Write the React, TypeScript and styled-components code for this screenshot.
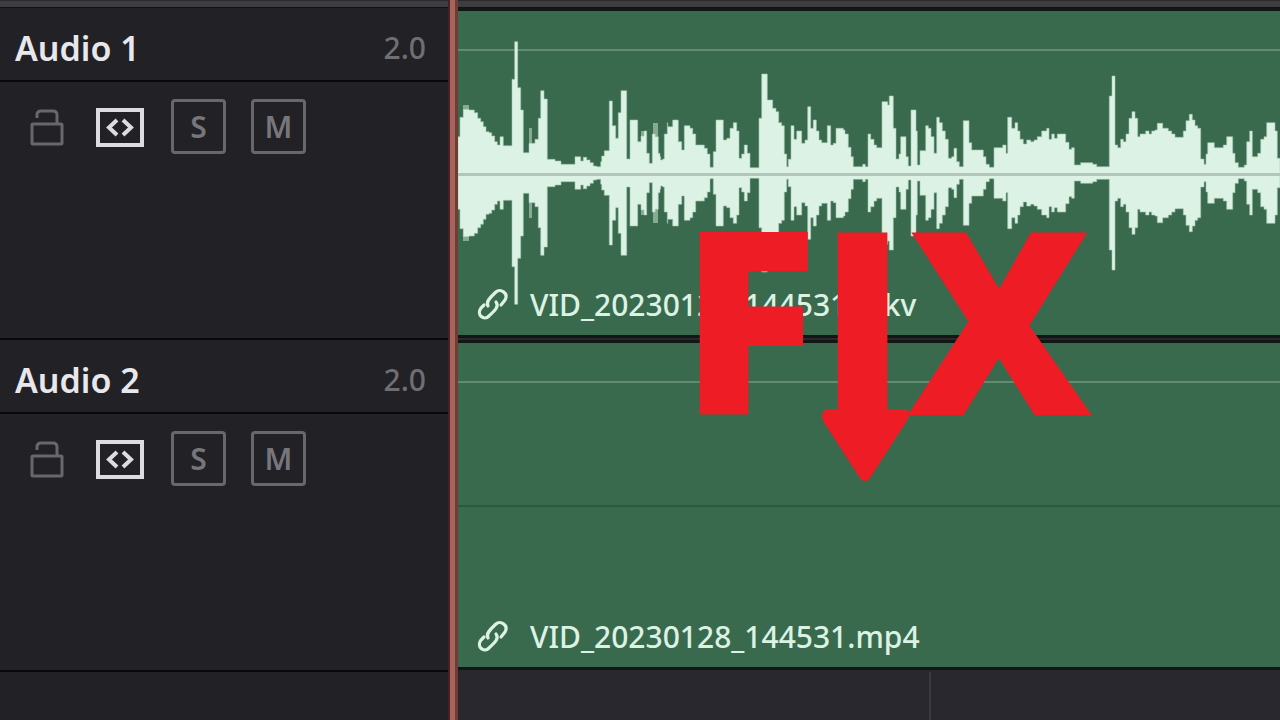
import React from "react";
import styled, { createGlobalStyle } from "styled-components";

const GlobalStyle = createGlobalStyle`
  * { box-sizing: border-box; }
  body {
    margin: 0;
    background: #222126;
    font-family: "Noto Sans", "Open Sans", sans-serif;
    overflow-x: hidden;
  }
`;

const Timeline = styled.main`
  position: relative;
  display: flex;
  flex-direction: column;
  min-height: 100vh;
  overflow: hidden;
  background: #222126;
`;

const Ruler = styled.div`
  height: 8px;
  background: #3e3e40;
  border-top: 1px solid #2a2a2c;
  border-bottom: 1px solid #111113;
`;

const TrackRow = styled.section`
  display: grid;
  grid-template-columns: 448px 1fr;
  height: 332px;
`;

const TrackHead = styled.div`
  display: flex;
  flex-direction: column;
  background: #222126;
  border-bottom: 2px solid #09090c;
`;

const TrackTitle = styled.header`
  display: flex;
  align-items: center;
  justify-content: space-between;
  height: 74px;
  padding: 8px 22px 0 15px;
  border-bottom: 2px solid #09090c;
`;

const TrackName = styled.h2`
  margin: 0;
  color: #e8e8ec;
  font-size: 34px;
  line-height: 40px;
  font-weight: 600;
`;

const Channels = styled.span`
  color: #6f6e73;
  font-size: 30px;
  line-height: 40px;
  font-weight: 500;
`;

const Controls = styled.div`
  display: flex;
  align-items: center;
  padding: 17px 0 0 28px;
`;

const IconButton = styled.button<{ $gap: number }>`
  display: flex;
  padding: 0;
  margin-right: ${(p) => p.$gap}px;
  border: 0;
  background: none;
`;

const LetterButton = styled.button`
  width: 55px;
  height: 55px;
  margin-right: 25px;
  padding: 0;
  border: 3px solid #68676c;
  border-radius: 4px;
  background: #222126;
  color: #77767b;
  font-family: inherit;
  font-size: 30px;
  line-height: 48px;
  font-weight: 600;
`;

const Lane = styled.div`
  display: flex;
  padding: 3px 0 3px 10px;
  background: #111714;
  border-bottom: 2px solid #29292d;
`;

const Clip = styled.article`
  position: relative;
  flex: 1;
  min-width: 0;
  display: flex;
  align-items: flex-end;
  background: #3a6a4e;
  overflow: hidden;
`;

const LevelLine = styled.div`
  position: absolute;
  top: 38px;
  left: 0;
  right: 0;
  height: 2px;
  background: #638b72;
`;

const CenterLine = styled.div<{ $tone: string }>`
  position: absolute;
  top: 162px;
  left: 0;
  right: 0;
  height: 2px;
  background: ${(p) => p.$tone};
`;

const WaveSvg = styled.svg`
  position: absolute;
  top: 0;
  left: 0;
  width: 100%;
  height: 100%;
`;

const ClipLabel = styled.div`
  position: relative;
  display: flex;
  align-items: center;
  gap: 18px;
  padding: 0 0 10px 16px;
  color: #dcf2e4;
  font-size: 30px;
  line-height: 40px;
  font-weight: 500;
`;

const EmptyRow = styled.div`
  flex: 1;
  display: grid;
  grid-template-columns: 448px 483px 1fr;
  min-height: 48px;
`;

const EmptyLane = styled.div`
  background: #29282e;

  & + & {
    border-left: 2px solid #3a3a40;
    margin-left: -2px;
  }
`;

const Playhead = styled.div`
  position: absolute;
  top: 0;
  bottom: 0;
  left: 448px;
  width: 10px;
  background: #a7645f;
  border-left: 2px solid #4b2023;
  border-right: 3px solid #713c31;
`;

const Callout = styled.div`
  position: absolute;
  top: 188px;
  left: 680px;
  color: #ee1c25;
  font-family: "Open Sans", "Noto Sans", sans-serif;
  font-size: 256px;
  line-height: 256px;
  font-weight: 800;
  white-space: nowrap;
`;

const ArrowHead = styled.svg`
  position: absolute;
  top: 409px;
  left: 821px;
`;

/* Columns of the wave form: [x, top y] on the timeline, three units to a pixel. */
const segments: { x: number; y: number; steps: string }[] = [
  {
    x: 450,
    y: 30,
    steps:
      "24:320 30:262 40:238 57:240 73:248 83:265 92:275 100:290 108:305 117:308 125:318 134:335 142:345 150:320 160:347 186:148 194:35 203:173 212:240 220:368 237:340 255:328 265:265 272:182 282:207 292:388 315:393 333:403 375:380 392:393 400:382 410:390 420:398 430:408 440:410 452:395 455:378 463:362 478:213 487:287 497:325 505:248 513:182 530:387 540:270 563:335 573:318 582:303 590:370 598:400 607:312 616:320 625:370 632:390 643:312 653:290",
  },
  {
    x: 660,
    y: 60,
    steps:
      "0:290 8:297 14:222 22:188 38:180 55:245 65:270 73:197 90:205 98:222 107:255 133:265 142:282 150:322 160:275 168:180 190:240 200:235 210:205 220:188 230:213 237:295 245:282 253:255 262:280 270:323 297:175 305:42 322:120 338:145 348:155 356:188 365:197 373:282 380:320 385:298 393:197 402:238 410:213 425:250 435:240 443:140 452:205 460:180 469:213 477:240 485:248 502:197 512:255 520:250 528:205 550:210 555:222 565:262 573:290 580:320",
  },
  {
    x: 860,
    y: 60,
    steps:
      "0:320 8:313 16:320 24:222 32:238 42:255 50:263 66:125 83:135 88:108 100:205 108:297 117:282 122:230 138:290 145:318 153:150 168:213 172:315 180:272 197:197 205:205 213:230 222:280 230:172 238:188 247:213 256:238 265:295 275:290 282:265 290:305 298:320 310:182 327:248 335:270 370:290 378:313 388:322 402:263 428:255 438:280 443:172 455:205 465:188 473:213 480:238 490:252 500:240 512:245 522:240 532:230 545:213 560:205 567:238 575:222 583:235 592:222",
  },
  {
    x: 1060,
    y: 60,
    steps:
      "0:222 17:247 27:268 35:263 43:315 62:308 98:313 110:320 148:108 156:48 165:255 173:263 182:238 190:245 198:222 207:175 216:155 225:175 233:230 240:222 257:213 267:222 275:213 285:210 292:190 308:205 325:213 335:222 345:232 370:213 378:182 388:163 397:180 405:197 413:205 422:297 432:313 438:282 443:248 463:263 490:255 500:230 518:280 525:308 535:322 553:315 560:245 569:213 577:290 593:280 602:238 612:230 620:188 640:188 645:213 652:295 660:295",
  },
];

const MIDDLE = 162;

const columns = segments
  .flatMap((s) =>
    s.steps.split(" ").map((pair) => {
      const [x, y] = pair.split(":").map(Number);
      return { x: s.x - 458 + x / 3, amp: MIDDLE + 11 - s.y - y / 3 };
    })
  )
  .sort((a, b) => a.x - b.x);

function outline(sign: 1 | -1) {
  let d = `M0 ${MIDDLE}`;
  let last = 0;
  for (const c of columns) {
    const y = MIDDLE - sign * Math.max(c.amp, 1);
    d += ` L${c.x.toFixed(1)} ${(MIDDLE - sign * last).toFixed(1)} L${c.x.toFixed(1)} ${y.toFixed(1)}`;
    last = Math.max(c.amp, 1);
  }
  return `${d} L822 ${(MIDDLE - sign * last).toFixed(1)} L822 ${MIDDLE}Z`;
}

/* Faint columns beside the peaks: x, width, amplitude. */
const faint = [
  [5, 6, 68],
  [71, 3, 45],
  [183, 3, 42],
  [195, 5, 50],
  [709, 10, 36],
];

function Waveform() {
  return (
    <WaveSvg viewBox="0 0 822 324" preserveAspectRatio="none" aria-hidden="true">
      {faint.map(([x, w, a]) => (
        <rect key={x} x={x} y={MIDDLE - a} width={w} height={a * 2} fill="#86ab94" />
      ))}
      <path d={outline(1)} fill="#dbf2e4" stroke="#a3c6b0" strokeWidth="0.6" />
      <path d={outline(-1)} fill="#dbf2e4" stroke="#a3c6b0" strokeWidth="0.6" />
      <path d="M0 162.5H822" stroke="#dbf2e4" strokeWidth="4" />
      <path d="M0 163.5H822" stroke="#b3c6ba" strokeWidth="3" />
    </WaveSvg>
  );
}

function LockIcon() {
  return (
    <svg width="38" height="40" viewBox="0 0 38 40" fill="none" stroke="#68676c" strokeWidth="3">
      <rect x="4" y="17" width="30" height="20" rx="1" />
      <path d="M9 11V8Q9 4 13 4H25Q29 4 29 8V17" />
    </svg>
  );
}

function AutoSelectIcon() {
  return (
    <svg width="50" height="40" viewBox="0 0 50 40" fill="none" stroke="#dddde1">
      <rect x="3" y="3" width="44" height="35" strokeWidth="4" />
      <path d="M22 13L14 20.500L22 28M28 13L36 20.500L28 28" strokeWidth="4" />
    </svg>
  );
}

function LinkIcon() {
  return (
    <svg width="38" height="38" viewBox="0 0 38 38" fill="none" stroke="#dcf2e4" strokeWidth="3.200" strokeLinecap="round">
      <path d="M14 20C11 15 18 10 22 6C26 2 35 7 31 14L27 19" />
      <path d="M22 16C26 21 19 26 15 30C10 35 2 29 7 22L10 19" />
    </svg>
  );
}

type TrackProps = { name: string; file: string; wave?: boolean };

function Track({ name, file, wave }: TrackProps) {
  return (
    <TrackRow aria-label={name}>
      <TrackHead>
        <TrackTitle>
          <TrackName>{name}</TrackName>
          <Channels>2.0</Channels>
        </TrackTitle>
        <Controls>
          <IconButton $gap={29} aria-label={`Lock ${name}`}>
            <LockIcon />
          </IconButton>
          <IconButton $gap={26} aria-label={`Auto select ${name}`}>
            <AutoSelectIcon />
          </IconButton>
          <LetterButton aria-label={`Solo ${name}`}>S</LetterButton>
          <LetterButton aria-label={`Mute ${name}`}>M</LetterButton>
        </Controls>
      </TrackHead>
      <Lane>
        <Clip>
          <LevelLine />
          {wave ? <Waveform /> : <CenterLine $tone="#30583f" />}
          <ClipLabel>
            <LinkIcon />
            <span>{file}</span>
          </ClipLabel>
        </Clip>
      </Lane>
    </TrackRow>
  );
}

export default function App() {
  return (
    <>
      <GlobalStyle />
      <Timeline>
        <Ruler />
        <Track name="Audio 1" file="VID_20230128_144531.mkv" wave />
        <Track name="Audio 2" file="VID_20230128_144531.mp4" />
        <EmptyRow>
          <div />
          <EmptyLane />
          <EmptyLane />
        </EmptyRow>
        <Playhead />
        <Callout>FIX</Callout>
        <ArrowHead width="90" height="74" viewBox="0 0 90 74" fill="#ee1c25" aria-hidden="true">
          <path d="M6 0H84Q90 3 87 10L51 66Q44 78 37 66L2 12Q-1 3 6 0Z" />
        </ArrowHead>
      </Timeline>
    </>
  );
}
